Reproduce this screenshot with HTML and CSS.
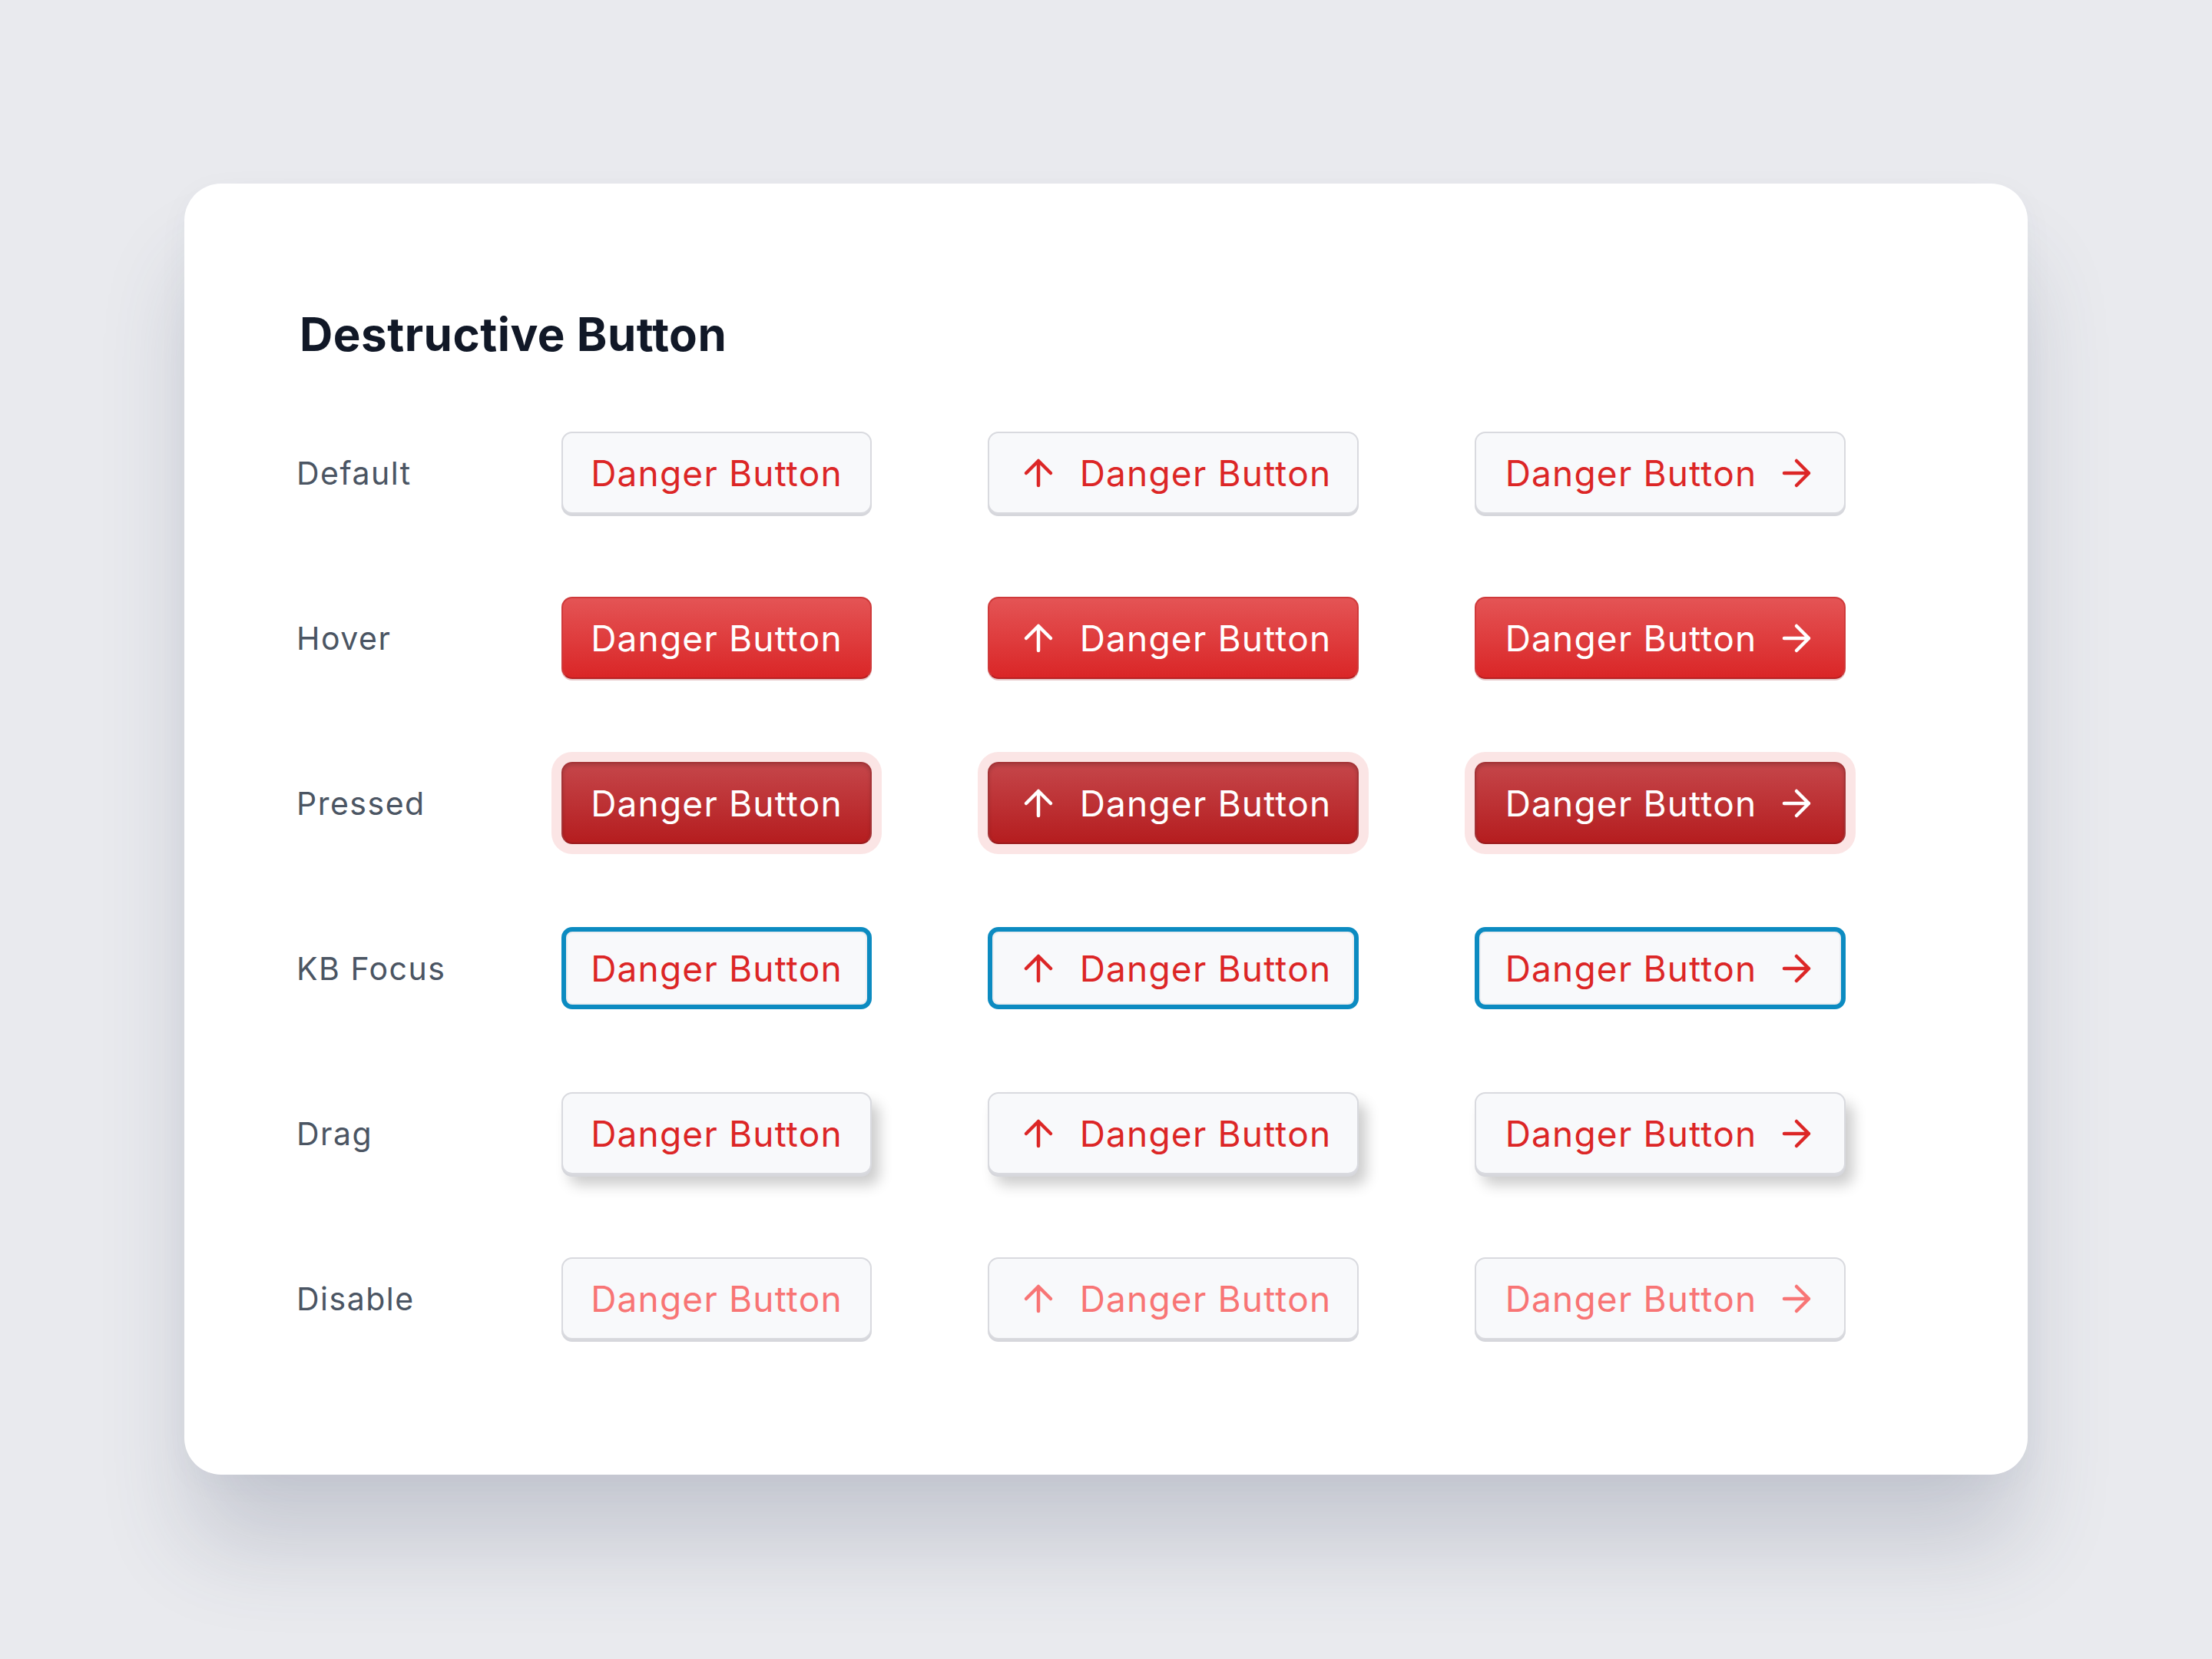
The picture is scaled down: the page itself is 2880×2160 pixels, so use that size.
FILE: index.html
```html
<!DOCTYPE html>
<html>
<head>
    <title>Destructive Button</title>
    <link rel="stylesheet" href="styles.css">
</head>
<body>
    <div class="card">
        <h1 class="title">Destructive Button</h1>

        <div class="states">
            <!-- Default -->
            <div class="label">Default</div>
            <button class="btn">Danger Button</button>
            <button class="btn lead"><svg class="ico" viewBox="0 0 48 48"><path d="M24 40V8M8 24 24 8l16 16"/></svg>Danger Button</button>
            <button class="btn">Danger Button<svg class="ico" viewBox="0 0 48 48"><path d="M8 24h32M24 8l16 16-16 16"/></svg></button>

            <!-- Hover -->
            <div class="label">Hover</div>
            <button class="btn hover">Danger Button</button>
            <button class="btn lead hover"><svg class="ico" viewBox="0 0 48 48"><path d="M24 40V8M8 24 24 8l16 16"/></svg>Danger Button</button>
            <button class="btn hover">Danger Button<svg class="ico" viewBox="0 0 48 48"><path d="M8 24h32M24 8l16 16-16 16"/></svg></button>

            <!-- Pressed -->
            <div class="label">Pressed</div>
            <button class="btn pressed">Danger Button</button>
            <button class="btn lead pressed"><svg class="ico" viewBox="0 0 48 48"><path d="M24 40V8M8 24 24 8l16 16"/></svg>Danger Button</button>
            <button class="btn pressed">Danger Button<svg class="ico" viewBox="0 0 48 48"><path d="M8 24h32M24 8l16 16-16 16"/></svg></button>

            <!-- Keyboard focus -->
            <div class="label">KB Focus</div>
            <button class="btn focus">Danger Button</button>
            <button class="btn lead focus"><svg class="ico" viewBox="0 0 48 48"><path d="M24 40V8M8 24 24 8l16 16"/></svg>Danger Button</button>
            <button class="btn focus">Danger Button<svg class="ico" viewBox="0 0 48 48"><path d="M8 24h32M24 8l16 16-16 16"/></svg></button>

            <!-- Drag -->
            <div class="label">Drag</div>
            <button class="btn drag">Danger Button</button>
            <button class="btn lead drag"><svg class="ico" viewBox="0 0 48 48"><path d="M24 40V8M8 24 24 8l16 16"/></svg>Danger Button</button>
            <button class="btn drag">Danger Button<svg class="ico" viewBox="0 0 48 48"><path d="M8 24h32M24 8l16 16-16 16"/></svg></button>

            <!-- Disabled -->
            <div class="label">Disable</div>
            <button class="btn disabled">Danger Button</button>
            <button class="btn lead disabled"><svg class="ico" viewBox="0 0 48 48"><path d="M24 40V8M8 24 24 8l16 16"/></svg>Danger Button</button>
            <button class="btn disabled">Danger Button<svg class="ico" viewBox="0 0 48 48"><path d="M8 24h32M24 8l16 16-16 16"/></svg></button>
        </div>
    </div>
</body>
</html>
```

FILE: styles.css
```css
html { height: 100%; background: #e9eaee; }
body { margin: 0; min-height: 100%; box-sizing: border-box; padding: 239px 0 0 240px; background: #e9eaee; font-family: Inter, "Noto Sans", sans-serif; }

.card { width: 2400px; height: 1681px; box-sizing: border-box; padding: 160px 0 0 146px; background: #fff; border-radius: 48px; box-shadow: 0 100px 120px -10px rgba(60, 70, 100, 0.2), 0 10px 40px rgba(60, 70, 100, 0.04); }

.title { margin: 0 0 91px 0; padding-left: 4px; font-size: 60px; font-weight: 700; color: #111827; letter-spacing: 0.5px; }

.states { display: grid; grid-template-columns: 194px 404px 483px 483px; grid-auto-rows: 107px; column-gap: 151px; row-gap: 108px; align-items: center; }

.label { font-size: 41px; color: #4b5563; letter-spacing: 1.5px; white-space: nowrap; }

.btn { display: flex; align-items: center; justify-content: center; gap: 28px; width: 100%; height: 107px; box-sizing: border-box; padding: 0; border: 2px solid #d9dadf; border-radius: 14px; background: #f8f9fb; color: #dc2626; font-family: Inter, "Noto Sans", sans-serif; font-size: 46px; letter-spacing: 1.2px; white-space: nowrap; box-shadow: 0 3px 0 #d6d7dc; cursor: pointer; }
.btn.lead { padding-left: 6px; gap: 30px; }
.ico { width: 48px; height: 48px; flex: none; fill: none; stroke: currentColor; stroke-width: 4.5; stroke-linecap: round; stroke-linejoin: round; }

.btn.hover { background: linear-gradient(#e45455, #da2627); border-color: #cf3a3b; border-bottom-color: #b82022; color: #fff; box-shadow: 0 2px 0 #e6c9ca; }
.btn.pressed { background: linear-gradient(#c5464a, #b51d1f); border-color: #a43336; border-bottom-color: #9b1c1e; color: #fff; box-shadow: inset 0 3px 4px rgba(0, 0, 0, 0.15), 0 0 0 13px #fbe5e5; }
.btn.focus { border: 6px solid #0c8bc1; box-shadow: inset 0 0 0 2px #eceef1; }
.btn.drag { box-shadow: 0 3px 0 #d6d7dc, 10px 14px 18px rgba(0, 0, 0, 0.2); }
.btn.disabled { color: #f87575; }
```
